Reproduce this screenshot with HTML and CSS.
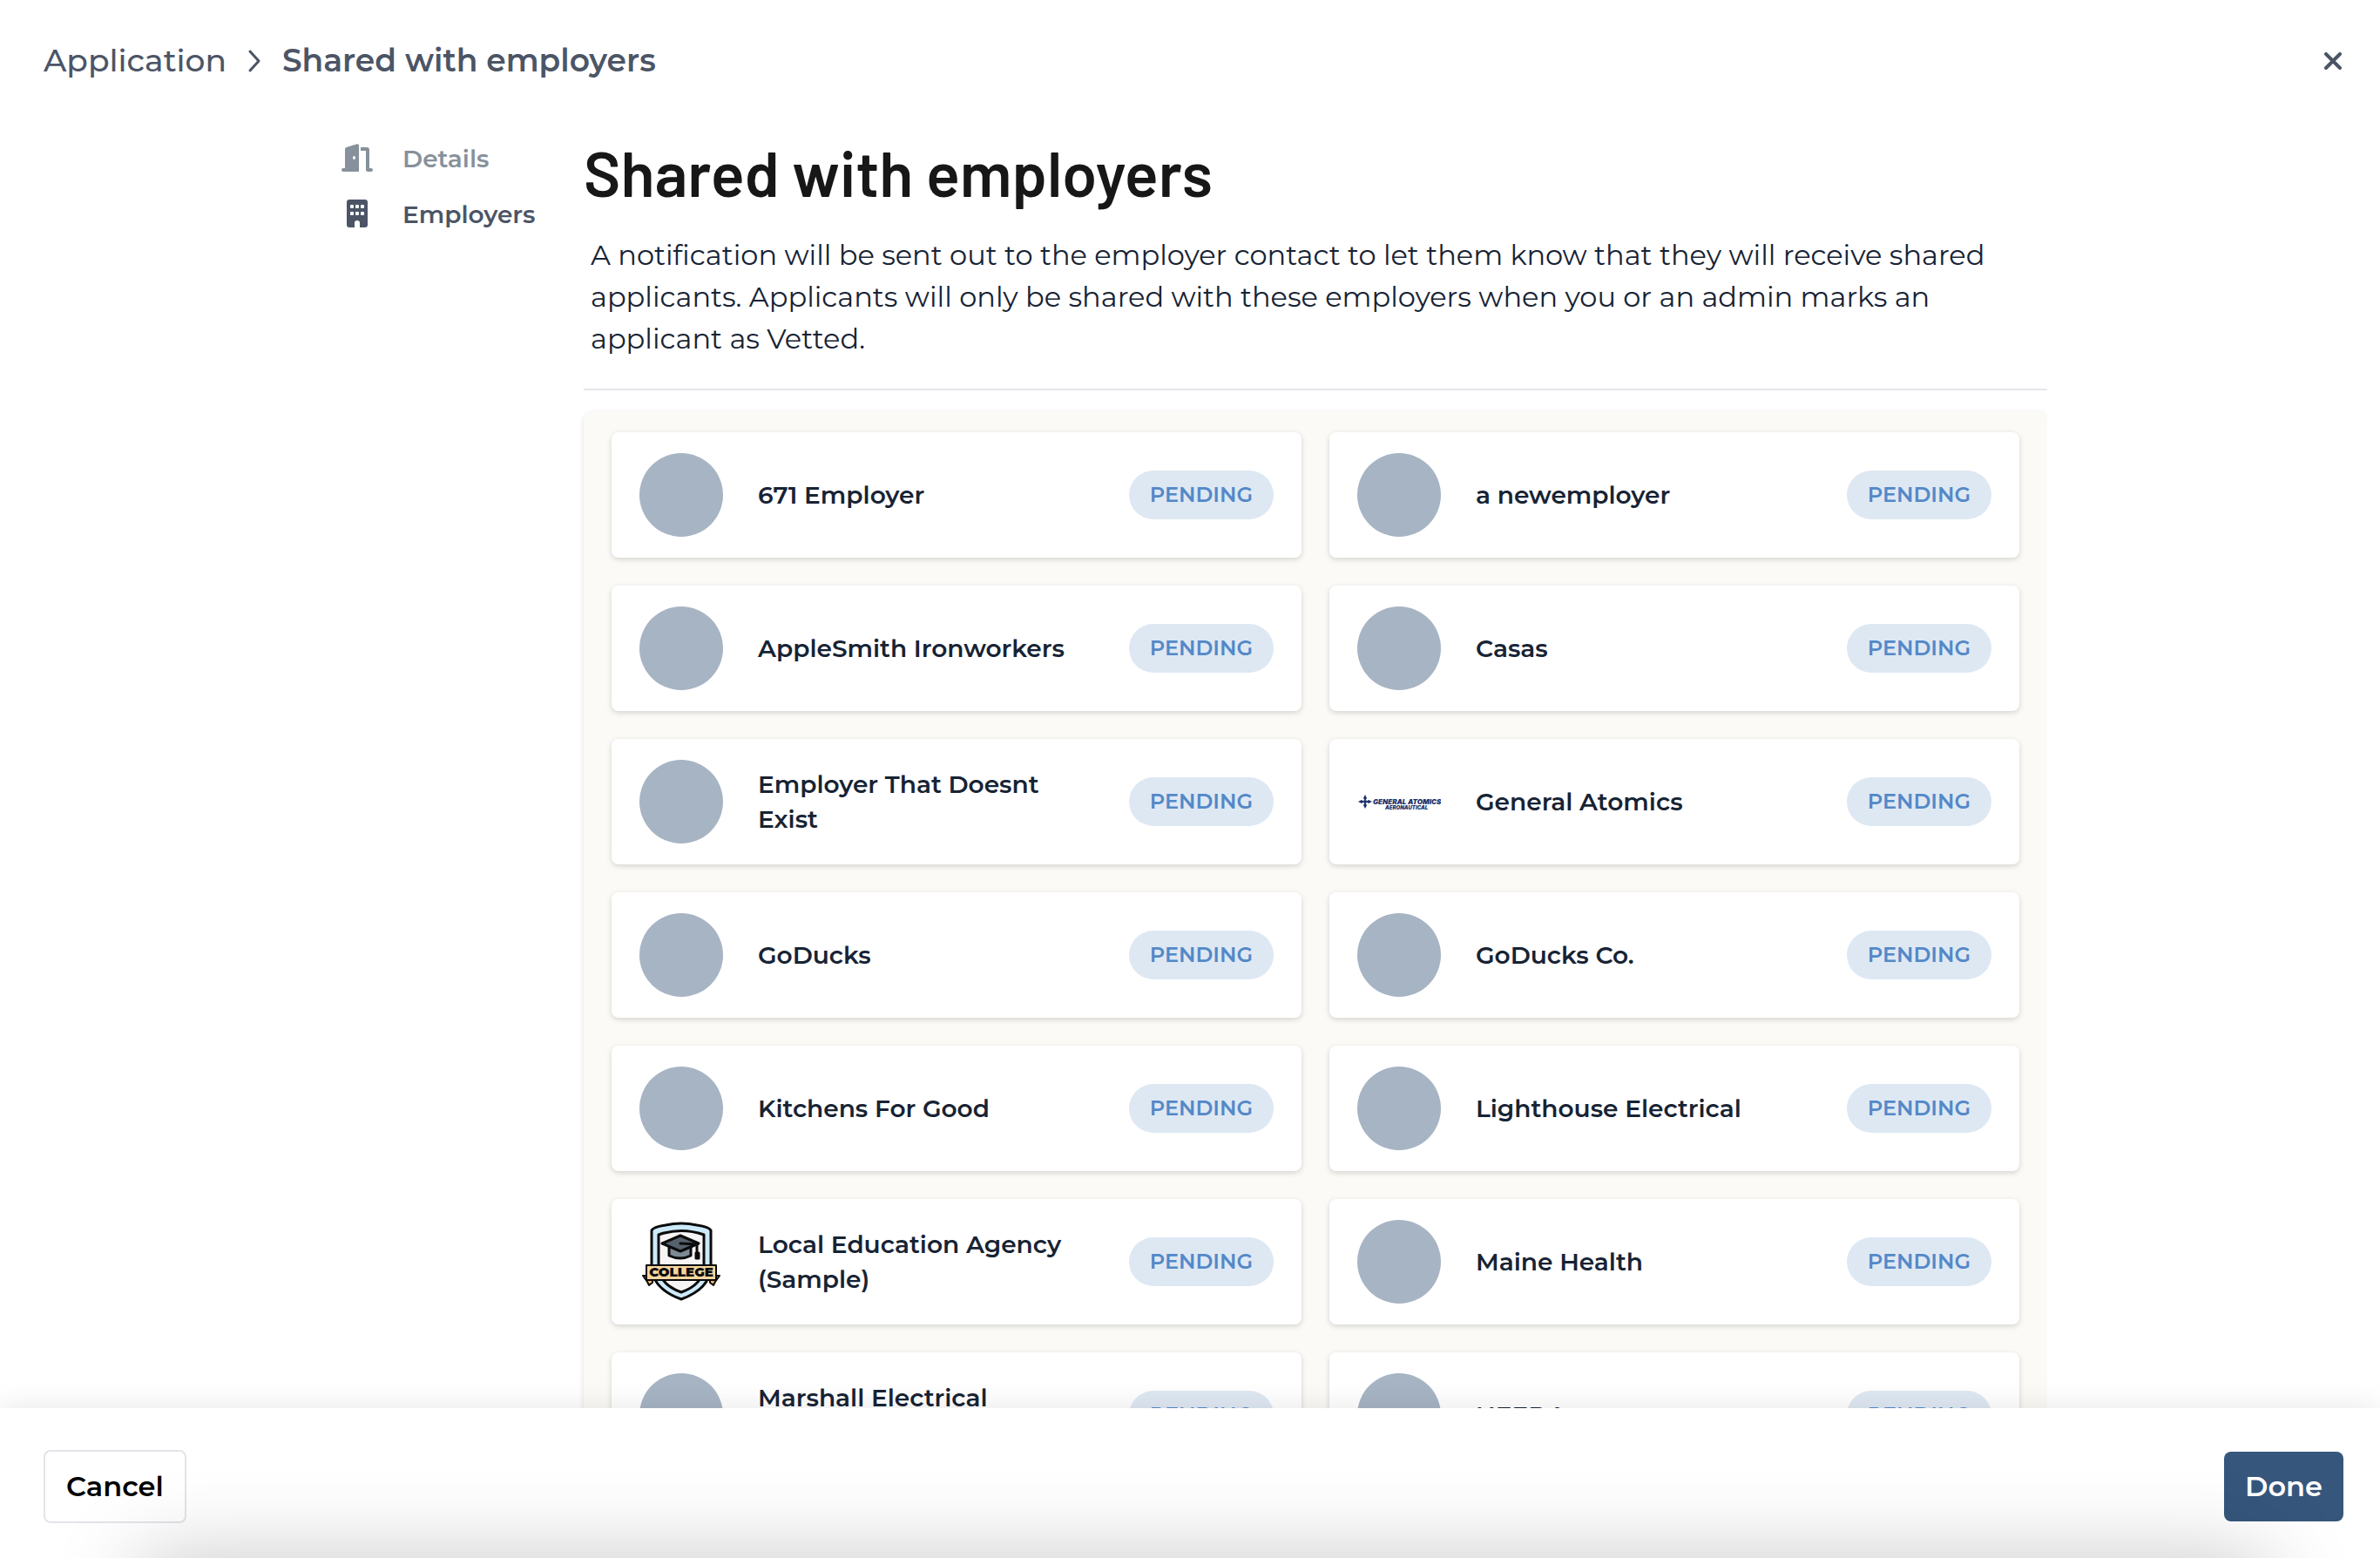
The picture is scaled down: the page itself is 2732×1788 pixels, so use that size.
FILE: index.html
```html
<!DOCTYPE html>
<html lang="en">
<head>
<meta charset="utf-8">
<title>Shared with employers</title>
<meta name="viewport" content="width=device-width, initial-scale=1">
<link rel="stylesheet" href="styles.css">
</head>
<body class="page">
<header class="topbar">
  <nav class="crumbs" aria-label="Breadcrumb">
    <a class="crumb" href="#">Application</a>
    <svg class="crumb-sep" viewBox="0 0 16 28" aria-hidden="true"><path d="M3 3l10 11L3 25"/></svg>
    <span class="crumb crumb-current">Shared with employers</span>
  </nav>
  <button class="close" type="button" aria-label="Close">
    <svg class="close-icon" viewBox="0 0 20 20" aria-hidden="true"><path d="M2 2l16 16M18 2L2 18"/></svg>
  </button>
</header>
<div class="content">
  <nav class="steps" aria-label="Steps">
    <a class="step" href="#">
      <svg class="step-icon" viewBox="0 0 36 32" aria-hidden="true"><path fill-rule="evenodd" d="M4 6.200Q4 4.500 5.700 4L18 .2Q20 0 20 2V32H2Q0 32 0 30T2 28H4zM14.500 14c-.9 0-1.500.9-1.500 2s.6 2 1.500 2 1.500-.9 1.500-2-.6-2-1.500-2z"/><path d="M22 4h7q3 0 3 3v21h2q2 0 2 2t-2 2h-4q-2 0-2-2V8h-6z"/></svg>
      Details
    </a>
    <a class="step step-current" href="#" aria-current="step">
      <svg class="step-icon" viewBox="0 0 36 32" aria-hidden="true"><path fill-rule="evenodd" d="M9 0h18q3 0 3 3v26q0 3-3 3h-6v-5q0-3-3-3t-3 3v5H9q-3 0-3-3V3q0-3 3-3zm1 7v2q0 1 1 1h2q1 0 1-1V7q0-1-1-1h-2q-1 0-1 1zm6 0v2q0 1 1 1h2q1 0 1-1V7q0-1-1-1h-2q-1 0-1 1zm6 0v2q0 1 1 1h2q1 0 1-1V7q0-1-1-1h-2q-1 0-1 1zM10 15v2q0 1 1 1h2q1 0 1-1v-2q0-1-1-1h-2q-1 0-1 1zm6 0v2q0 1 1 1h2q1 0 1-1v-2q0-1-1-1h-2q-1 0-1 1zm6 0v2q0 1 1 1h2q1 0 1-1v-2q0-1-1-1h-2q-1 0-1 1z"/></svg>
      Employers
    </a>
  </nav>
  <main class="main">
    <h1 class="title">Shared with employers</h1>
    <p class="intro">A notification will be sent out to the employer contact to let them know that they will receive shared applicants. Applicants will only be shared with these employers when you or an admin marks an applicant as Vetted.</p>
    <ul class="panel">
      <li class="card"><span class="avatar"></span><span class="name">671 Employer</span><span class="badge">PENDING</span></li>
      <li class="card"><span class="avatar"></span><span class="name">a newemployer</span><span class="badge">PENDING</span></li>
      <li class="card"><span class="avatar"></span><span class="name">AppleSmith Ironworkers</span><span class="badge">PENDING</span></li>
      <li class="card"><span class="avatar"></span><span class="name">Casas</span><span class="badge">PENDING</span></li>
      <li class="card"><span class="avatar"></span><span class="name">Employer That Doesnt Exist</span><span class="badge">PENDING</span></li>
      <li class="card">
        <svg class="logo" viewBox="0 0 96 96" role="img" aria-label="General Atomics Aeronautical">
          <g fill="#1b2f6b">
            <path d="M9 40l2 4-2 3-2-3zM9 49l2 3-2 4-2-4zM1 48l4-2 3 2-3 2zM10 48l3-2 4 2-4 2z"/>
            <circle cx="9" cy="48" r="2"/>
          </g>
          <text class="ga-name" x="18" y="51">GENERAL ATOMICS</text>
          <text class="ga-sub" x="32" y="57">AERONAUTICAL</text>
        </svg>
        <span class="name">General Atomics</span><span class="badge">PENDING</span></li>
      <li class="card"><span class="avatar"></span><span class="name">GoDucks</span><span class="badge">PENDING</span></li>
      <li class="card"><span class="avatar"></span><span class="name">GoDucks Co.</span><span class="badge">PENDING</span></li>
      <li class="card"><span class="avatar"></span><span class="name">Kitchens For Good</span><span class="badge">PENDING</span></li>
      <li class="card"><span class="avatar"></span><span class="name">Lighthouse Electrical</span><span class="badge">PENDING</span></li>
      <li class="card">
        <svg class="logo" viewBox="0 0 96 96" role="img" aria-label="College crest">
          <g stroke="#0b0b0b" stroke-width="3" stroke-linejoin="round" stroke-linecap="round">
            <path fill="#cdeafb" d="M14 12Q16 8 30 6Q48 2 66 6Q80 8 82 12V54Q81 79 48 91Q15 79 14 54z"/>
            <path fill="#f7f4f6" d="M22 17Q48 8 74 17V54Q73 74 48 83Q23 74 22 54z"/>
            <path fill="#7d8995" d="M34 31v10q13 6 25 0V31z"/>
            <path fill="#56616e" d="M26 27l21-9 21 9-21 9z"/>
            <path fill="none" d="M47 27l19 1v9"/>
            <path fill="#56616e" d="M65 38h3v6h-3z"/>
            <path fill="#f0b45c" stroke-width="2" d="M4 64h11v8l-4 3-2-4zM92 64H81v8l4 3 2-4z"/>
            <path fill="#f6d6a0" stroke-width="2" d="M8 52h80v17H8z"/>
          </g>
          <text class="crest-text" x="48" y="65" text-anchor="middle">COLLEGE</text>
        </svg>
        <span class="name">Local Education Agency (Sample)</span><span class="badge">PENDING</span></li>
      <li class="card"><span class="avatar"></span><span class="name">Maine Health</span><span class="badge">PENDING</span></li>
      <li class="card"><span class="avatar"></span><span class="name">Marshall Electrical<br>&nbsp;</span><span class="badge">PENDING</span></li>
      <li class="card"><span class="avatar"></span><span class="name">NEEDA</span><span class="badge">PENDING</span></li>
    </ul>
  </main>
</div>
<footer class="actions">
  <button class="btn btn-plain" type="button">Cancel</button>
  <button class="btn btn-primary" type="button">Done</button>
</footer>
</body>
</html>
```
FILE: styles.css
```css
* { box-sizing: border-box; }

html { overflow: hidden; }

.page {
  margin: 0;
  height: 100vh;
  display: flex;
  flex-direction: column;
  overflow: hidden;
  background: #fff;
  color: #172334;
  font-family: Montserrat, Inter, "Noto Sans", sans-serif;
}

.topbar {
  flex: none;
  display: flex;
  align-items: center;
  justify-content: space-between;
  padding: 40px 40px 40px 50px;
}

.crumbs { display: flex; align-items: center; gap: 24px; }

.crumb {
  padding-bottom: 2px;
  color: #4c5566;
  font-size: 36px;
  font-weight: 500;
  line-height: 58px;
  text-decoration: none;
}

.crumb-current { font-weight: 600; }

.crumb-sep {
  width: 16px;
  height: 28px;
  fill: none;
  stroke: #4c5566;
  stroke-width: 3;
  stroke-linecap: round;
  stroke-linejoin: round;
}

.close {
  display: flex;
  padding: 4px;
  border: 0;
  background: none;
}

.close-icon {
  width: 20px;
  height: 20px;
  fill: none;
  stroke: #4c5566;
  stroke-width: 4;
  stroke-linecap: round;
}

.content {
  flex: 1;
  min-height: 0;
  width: 100%;
  max-width: 1968px;
  margin: 0 auto;
  display: flex;
  overflow: hidden;
}

.steps {
  flex: none;
  width: 288px;
  padding: 10px;
  display: flex;
  flex-direction: column;
}

.step {
  display: flex;
  align-items: center;
  gap: 34px;
  color: #87919b;
  font-size: 28px;
  font-weight: 600;
  line-height: 64px;
  text-decoration: none;
}

.step-current { color: #4c5566; }

.step-icon { width: 36px; height: 32px; margin-bottom: 2px; fill: currentColor; }

.main { flex: 1; min-width: 0; }

.title {
  margin: 0;
  color: #171717;
  font-family: Barlow, Roboto, sans-serif;
  font-size: 72px;
  font-weight: 600;
  line-height: 114px;
}

.intro {
  margin: 0;
  padding: 15px 8px 33px;
  border-bottom: 2px solid #e4e4ea;
  font-size: 32px;
  line-height: 48px;
}

.panel {
  margin: 24px 0 0;
  padding: 24px 32px;
  list-style: none;
  display: grid;
  grid-template-columns: 1fr 1fr;
  gap: 32px;
  border-radius: 12px;
  background: #fbfaf6;
  box-shadow: 0 2px 6px rgba(0, 0, 0, .12);
}

.card {
  min-height: 144px;
  padding: 24px 32px;
  display: flex;
  align-items: center;
  gap: 40px;
  border-radius: 8px;
  background: #fff;
  box-shadow: 0 2px 6px rgba(0, 0, 0, .16);
}

.avatar, .logo { flex: none; width: 96px; height: 96px; }

.avatar { border-radius: 50%; background: #a7b4c4; }

.name {
  flex: 1;
  font-size: 28px;
  font-weight: 600;
  line-height: 40px;
}

.badge {
  flex: none;
  padding: 0 24px;
  border-radius: 28px;
  background: #dee8f3;
  color: #5389c8;
  font-size: 24px;
  font-weight: 600;
  line-height: 56px;
}

.ga-name, .ga-sub { fill: #1b2f6b; font-family: Inter, sans-serif; font-style: italic; font-weight: 900; }
.ga-name { font-size: 8px; }
.ga-sub { font-size: 6px; }
.crest-text { fill: #0b0b0b; font-family: Montserrat, Inter, sans-serif; font-size: 15px; font-weight: 900; }

.actions {
  position: relative;
  flex: none;
  display: flex;
  align-items: center;
  justify-content: space-between;
  padding: 48px 42px 40px 50px;
  background: #fff;
  box-shadow: 0 0 32px rgba(0, 0, 0, .1);
}

/* Soft shadow rising from the lower edge of the window */
.actions::after {
  content: "";
  position: absolute;
  top: 100%;
  left: 160px;
  right: 130px;
  height: 200px;
  box-shadow: 0 0 100px rgba(0, 0, 0, .22);
  pointer-events: none;
}

.btn {
  padding: 0 24px;
  border-radius: 8px;
  font-family: inherit;
  font-size: 32px;
  font-weight: 600;
  line-height: 80px;
}

.btn-plain {
  border: 2px solid #e4e4ea;
  background: transparent;
  color: #000;
}

.btn-primary {
  border: 0;
  background: #36567c;
  color: #fff;
}
```
